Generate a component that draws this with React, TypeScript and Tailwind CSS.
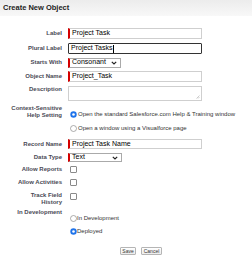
import React from "react";

const font = { fontFamily: '"Liberation Sans", Arial, sans-serif' };

const Label = ({ children, className = "" }: { children: React.ReactNode; className?: string }) => (
  <div className={"w-[62px] shrink-0 text-right text-[6px] font-bold leading-[7px] text-[#4a4a56] " + className}>{children}</div>
);

const Chevron = () => (
  <svg width="6" height="4" viewBox="0 0 6 4" className="shrink-0">
    <path d="M0.8 0.8 L3 3 L5.2 0.8" fill="none" stroke="#222" strokeWidth="1.2" />
  </svg>
);

const Radio = ({ checked }: { checked?: boolean }) => (
  <svg width="7" height="7" viewBox="0 0 7 7" className="shrink-0">
    {checked ? (
      <>
        <circle cx="3.5" cy="3.5" r="3.2" fill="#1f73ea" />
        <circle cx="3.5" cy="3.5" r="1.3" fill="#fff" />
      </>
    ) : (
      <circle cx="3.5" cy="3.5" r="3" fill="#fff" stroke="#8a8a8a" strokeWidth="0.7" />
    )}
  </svg>
);

const Checkbox = () => <div className="h-[7px] w-[7px] rounded-[1px] border border-[#8a8a8a] bg-white" />;

export default function App() {
  return (
    <div className="h-[270px] w-[252px] overflow-hidden bg-white" style={font}>
      <div className="flex h-[16px] items-center bg-gradient-to-b from-[#ececec] to-[#f8f8f8] pl-[3px] text-[7.5px] font-bold text-[#222]">
        Create New Object
      </div>

      <div className="mt-[12px] flex flex-col">
        {/* Label */}
        <div className="flex h-[11px] items-center gap-[6px]">
          <Label>Label</Label>
          <div className="flex h-[11px] w-[134px] items-center border border-l-2 border-[#cfcfcf] border-l-[#d40000] pl-[2px] text-[7px] text-black">
            Project Task
          </div>
        </div>

        {/* Plural Label */}
        <div className="mt-[4px] flex h-[11px] items-center gap-[6px]">
          <Label>Plural Label</Label>
          <div className="flex h-[11px] w-[134px] items-center rounded-[1px] border-[1.5px] border-[#333] pl-[2px] text-[7px] text-black">
            Project Tasks<span className="ml-[0.5px] h-[8px] w-[0.6px] bg-black" />
          </div>
        </div>

        {/* Starts With */}
        <div className="mt-[3px] flex h-[11px] items-center gap-[6px]">
          <Label>Starts With</Label>
          <div className="flex h-[10px] w-[53px] items-center justify-between border border-l-2 border-[#aaa] border-l-[#d40000] pl-[2px] pr-[3px] text-[7px] text-black">
            Consonant
            <Chevron />
          </div>
        </div>

        {/* Object Name */}
        <div className="mt-[3px] flex h-[11px] items-center gap-[6px]">
          <Label>Object Name</Label>
          <div className="flex h-[11px] w-[134px] items-center border border-l-2 border-[#cfcfcf] border-l-[#d40000] pl-[2px] text-[7px] text-black">
            Project_Task
          </div>
        </div>

        {/* Description */}
        <div className="mt-[4px] flex items-start gap-[6px]">
          <Label className="pt-[0px]">Description</Label>
          <div className="relative h-[15px] w-[134px] border border-[#cfcfcf]">
            <svg width="4" height="4" viewBox="0 0 4 4" className="absolute bottom-[1px] right-[1px]">
              <path d="M0.5 3.5 L3.5 0.5 M2 3.5 L3.5 2" stroke="#999" strokeWidth="0.5" />
            </svg>
          </div>
        </div>

        {/* Context-Sensitive Help Setting */}
        <div className="mt-[4px] flex items-start gap-[6px]">
          <Label>
            Context-Sensitive
            <br />
            Help Setting
          </Label>
          <div className="flex flex-col pt-[6px] text-[6px] leading-[7px] text-[#333]">
            <div className="flex items-center gap-[1px] pl-[2px]">
              <Radio checked />
              <span>Open the standard Salesforce.com Help &amp; Training window</span>
            </div>
            <div className="mt-[7px] flex items-center gap-[1px] pl-[2px]">
              <Radio />
              <span>Open a window using a Visualforce page</span>
            </div>
          </div>
        </div>

        {/* Record Name */}
        <div className="mt-[7px] flex h-[10px] items-center gap-[6px]">
          <Label>Record Name</Label>
          <div className="flex h-[10px] w-[134px] items-center border border-l-2 border-[#cfcfcf] border-l-[#d40000] pl-[2px] text-[7px] text-black">
            Project Task Name
          </div>
        </div>

        {/* Data Type */}
        <div className="mt-[4px] flex h-[9px] items-center gap-[6px]">
          <Label>Data Type</Label>
          <div className="flex h-[9px] w-[54px] items-center justify-between border border-l-2 border-[#aaa] border-l-[#d40000] pl-[2px] pr-[3px] text-[7px] text-black">
            Text
            <Chevron />
          </div>
        </div>

        {/* Allow Reports */}
        <div className="mt-[4px] flex items-start gap-[6px]">
          <Label>Allow Reports</Label>
          <div className="pl-[2px] pt-[0px]">
            <Checkbox />
          </div>
        </div>

        {/* Allow Activities */}
        <div className="mt-[6px] flex items-start gap-[6px]">
          <Label>Allow Activities</Label>
          <div className="pl-[2px] pt-[0px]">
            <Checkbox />
          </div>
        </div>

        {/* Track Field History */}
        <div className="mt-[6px] flex items-start gap-[6px]">
          <Label>
            Track Field
            <br />
            History
          </Label>
          <div className="pl-[2px] pt-[1px]">
            <Checkbox />
          </div>
        </div>

        {/* In Development */}
        <div className="mt-[3px] flex items-start gap-[6px]">
          <Label>In Development</Label>
          <div className="flex flex-col pt-[6px] text-[6px] leading-[7px] text-[#333]">
            <div className="flex items-center gap-[0px] pl-[2px]">
              <Radio />
              <span>In Development</span>
            </div>
            <div className="mt-[6px] flex items-center gap-[0px] pl-[2px]">
              <Radio checked />
              <span>Deployed</span>
            </div>
          </div>
        </div>

        {/* Buttons */}
        <div className="mt-[12px] flex gap-[5px] pl-[120px]">
          <button className="h-[8px] w-[16px] rounded-[1px] border border-[#b5b5b5] bg-gradient-to-b from-white to-[#ececec] text-[5px] leading-[6px] text-[#333]">
            Save
          </button>
          <button className="h-[8px] w-[21px] rounded-[1px] border border-[#b5b5b5] bg-gradient-to-b from-white to-[#ececec] text-[5px] leading-[6px] text-[#333]">
            Cancel
          </button>
        </div>
      </div>
    </div>
  );
}
